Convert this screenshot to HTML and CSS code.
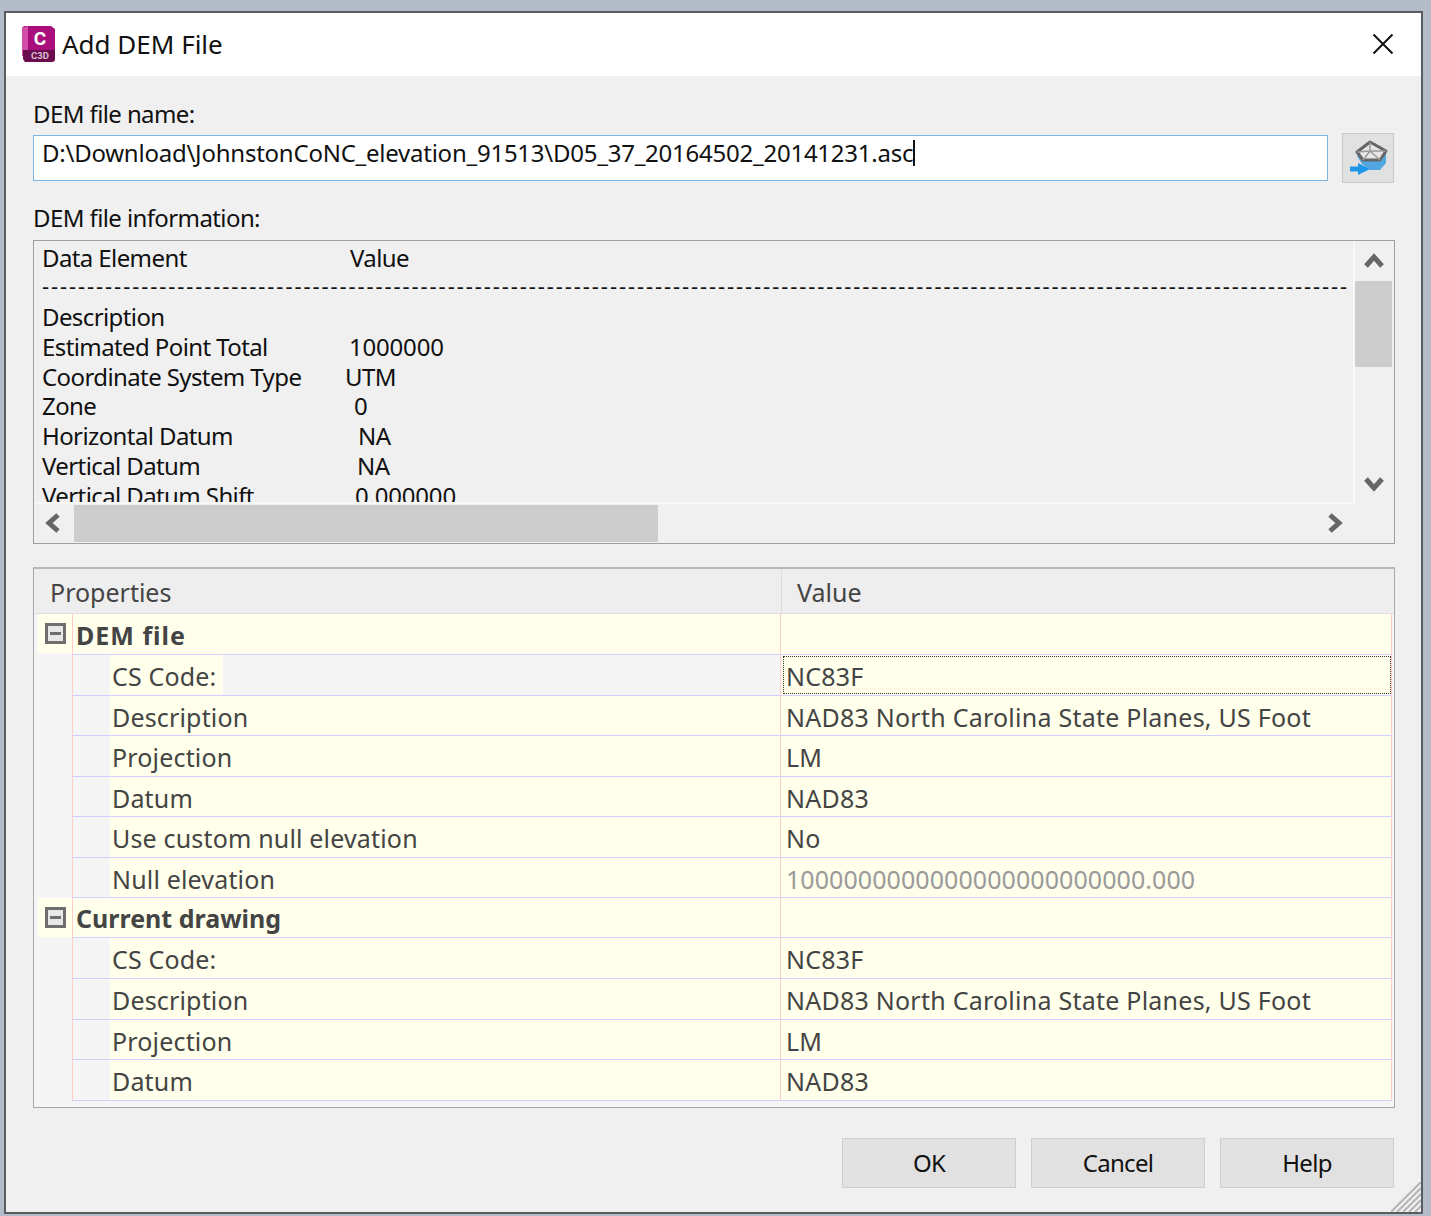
FILE: index.html
```html
<!DOCTYPE html>
<html lang="en">
<head>
<meta charset="utf-8">
<title>Add DEM File</title>
<link rel="stylesheet" href="styles.css">
</head>
<body>
<div class="window">
  <header class="titlebar">
    <svg class="app-icon" width="34" height="37" viewBox="0 0 34 37">
      <path d="M3 1H30L34 4V29H4L1 31V3Z" fill="#a80f7d"/>
      <path d="M1 3L7 1V27L1 30Z" fill="#d14fa6"/>
      <path d="M2 25H34V34Q34 37 31 37H4L2 34Z" fill="#6a0d4e"/>
      <text x="19" y="20" class="icon-c">C</text>
      <text x="19" y="34" class="icon-sub">C3D</text>
    </svg>
    <span class="title">Add DEM File</span>
    <svg class="close" width="22" height="22" viewBox="0 0 22 22"><path d="M1.500 1.500L20.500 20.500M20.500 1.500L1.500 20.500" stroke="#111" stroke-width="2" fill="none"/></svg>
  </header>
  <main class="content">
    <label class="label label-first">DEM file name:</label>
    <div class="file-row">
      <div class="file-input"><span class="file-text">D:\Download\JohnstonCoNC_elevation_91513\D05_37_20164502_20141231.asc</span><span class="caret"></span></div>
      <button class="browse" type="button">
        <svg width="50" height="48" viewBox="-5 -4 50 48">
          <path d="M38 13V25L32 32H22L14 26L9 18Z" fill="#52a7e0"/>
          <path d="M22 4L38 13L32 22H15L9 14Z" fill="#e6e6e6" stroke="#666" stroke-width="3" stroke-linejoin="round"/>
          <path d="M22 4V13M22 13L9 14M22 13L38 13M22 13L15 22M22 13L32 22" stroke="#9a9a9a" stroke-width="1.500" fill="none"/>
          <path d="M2 28.500H10V25L22 31L10 37V33.500H2Z" fill="#1e96ea"/>
        </svg>
      </button>
    </div>
    <label class="label label-second">DEM file information:</label>
    <section class="info">
      <div class="info-text">
        <div class="line"><span class="k">Data Element</span><span class="v off-2">Value</span></div>
        <div class="dashes">-------------------------------------------------------------------------------------------------------------------------------------------------</div>
        <div class="line"><span class="k">Description</span></div>
        <div class="line"><span class="k">Estimated Point Total</span><span class="v off-1 num">1000000</span></div>
        <div class="line"><span class="k">Coordinate System Type</span><span class="v off-0">UTM</span></div>
        <div class="line"><span class="k">Zone</span><span class="v off-3 num">0</span></div>
        <div class="line"><span class="k">Horizontal Datum</span><span class="v off-4">NA</span></div>
        <div class="line"><span class="k">Vertical Datum</span><span class="v off-5">NA</span></div>
        <div class="line"><span class="k">Vertical Datum Shift</span><span class="v off-6 num">0.000000</span></div>
      </div>
      <div class="vscroll">
        <svg class="arrow" width="20" height="16" viewBox="0 0 20 16"><path d="M2 14L10 5L18 14" stroke="#666" stroke-width="5" fill="none"/></svg>
        <div class="vthumb"></div>
        <svg class="arrow arrow-down" width="20" height="16" viewBox="0 0 20 16"><path d="M2 2L10 11L18 2" stroke="#666" stroke-width="5" fill="none"/></svg>
      </div>
      <div class="hscroll">
        <svg class="harrow" width="16" height="20" viewBox="0 0 16 20"><path d="M14 2L5 10L14 18" stroke="#666" stroke-width="5" fill="none"/></svg>
        <div class="hthumb"></div>
        <svg class="harrow harrow-right" width="16" height="20" viewBox="0 0 16 20"><path d="M2 2L11 10L2 18" stroke="#666" stroke-width="5" fill="none"/></svg>
      </div>
    </section>
    <section class="props">
      <div class="props-head"><div class="head-name">Properties</div><div class="head-val">Value</div></div>
      <div class="row group tall">
        <div class="gut"><span class="minus"></span></div>
        <div class="name"><span class="group-text wide">DEM file</span></div>
        <div class="val"></div>
      </div>
      <div class="row tall">
        <div class="gut"></div>
        <div class="name"><span class="name-text fit">CS Code:</span></div>
        <div class="val"><span class="focus">NC83F</span></div>
      </div>
      <div class="row"><div class="gut"></div><div class="name"><span class="name-text">Description</span></div><div class="val"><span class="val-text">NAD83 North Carolina State Planes, US Foot</span></div></div>
      <div class="row tall"><div class="gut"></div><div class="name"><span class="name-text">Projection</span></div><div class="val"><span class="val-text">LM</span></div></div>
      <div class="row"><div class="gut"></div><div class="name"><span class="name-text">Datum</span></div><div class="val"><span class="val-text">NAD83</span></div></div>
      <div class="row tall"><div class="gut"></div><div class="name"><span class="name-text">Use custom null elevation</span></div><div class="val"><span class="val-text">No</span></div></div>
      <div class="row"><div class="gut"></div><div class="name"><span class="name-text">Null elevation</span></div><div class="val"><span class="val-text disabled">1000000000000000000000000.000</span></div></div>
      <div class="row group">
        <div class="gut"><span class="minus"></span></div>
        <div class="name"><span class="group-text">Current drawing</span></div>
        <div class="val"></div>
      </div>
      <div class="row tall"><div class="gut"></div><div class="name"><span class="name-text">CS Code:</span></div><div class="val"><span class="val-text">NC83F</span></div></div>
      <div class="row tall"><div class="gut"></div><div class="name"><span class="name-text">Description</span></div><div class="val"><span class="val-text">NAD83 North Carolina State Planes, US Foot</span></div></div>
      <div class="row"><div class="gut"></div><div class="name"><span class="name-text">Projection</span></div><div class="val"><span class="val-text">LM</span></div></div>
      <div class="row tall"><div class="gut"></div><div class="name"><span class="name-text">Datum</span></div><div class="val"><span class="val-text">NAD83</span></div></div>
    </section>
    <footer class="buttons">
      <button class="btn" type="button">OK</button>
      <button class="btn" type="button">Cancel</button>
      <button class="btn" type="button">Help</button>
    </footer>
  </main>
  <svg class="grip" width="30" height="30" viewBox="0 0 30 30"><path d="M30 0L0 30M30 6L6 30M30 12L12 30M30 18L18 30M30 24L24 30" stroke="#b4b4b4" stroke-width="2" fill="none"/></svg>
</div>
</body>
</html>
```

FILE: styles.css
```css
* { box-sizing: border-box; }
html, body { margin: 0; height: 1216px; overflow: hidden; }
body {
  background: #b3bcc8;
  padding: 11px 8px 0 4px;
  font-family: "Noto Sans", sans-serif;
  color: #111;
}
.window {
  position: relative;
  width: 1419px;
  height: 1203px;
  border: 2px solid #5a5d60;
  background: #f0f0f0;
  overflow: hidden;
}
.titlebar {
  height: 63px;
  background: #fff;
  display: flex;
  align-items: center;
  padding: 0 27px 0 15px;
}
.app-icon { flex: none; margin-top: -2px; }
.icon-c { font: 700 19px Roboto, sans-serif; fill: #fff; text-anchor: middle; }
.icon-sub { font: 700 9.500px Roboto, sans-serif; fill: #dcc0d2; text-anchor: middle; }
.title { margin-left: 7px; margin-top: -2px; font-size: 26px; line-height: 36px; color: #111; }
.close { margin-left: auto; margin-top: -2px; }
.content { padding: 0 26px 0 27px; }
.label { display: block; font-size: 24px; line-height: 34px; letter-spacing: -0.6px; }
.label-first { padding-top: 21px; height: 57px; margin-bottom: 0; line-height: 33px; }
.label-second { margin-top: 18px; margin-bottom: 5px; }
.file-row { display: flex; align-items: center; height: 50px; }
.file-input {
  width: 1295px;
  height: 46px;
  background: #fff;
  border: 1px solid #7ab6e6;
  padding: 0 0 10px 8px;
  font-size: 24px;
  line-height: 34px;
  letter-spacing: -0.24px;
  white-space: nowrap;
  display: flex;
  align-items: center;
}
.caret { display: inline-block; width: 2px; height: 26px; background: #111; }
.browse {
  margin-left: 14px;
  width: 52px;
  height: 50px;
  padding: 0;
  background: #e1e1e1;
  border: 1px solid #c9c9c9;
  display: flex;
  align-items: center;
  justify-content: center;
}
.info {
  height: 304px;
  border: 1px solid #a0a0a0;
  display: grid;
  grid-template-columns: 1fr 39px;
  grid-template-rows: 1fr 39px;
}
.info-text {
  overflow: hidden;
  padding: 2px 0 0 8px;
  border-right: 2px solid #f8f8f8;
  border-bottom: 2px solid #f8f8f8;
  min-width: 0;
  min-height: 0;
  font-size: 24px;
  letter-spacing: -0.6px;
}
.line { display: flex; height: 29.700px; line-height: 29px; white-space: pre; }
.k { width: 308px; flex: none; }
.num { letter-spacing: -0.2px; }
.off-0 { margin-left: -5px; }
.off-1 { margin-left: -1px; }
.off-2 { margin-left: 0; }
.off-3 { margin-left: 4px; }
.off-4 { margin-left: 8px; }
.off-5 { margin-left: 7px; }
.off-6 { margin-left: 5px; }
.dashes { height: 29.700px; font-size: 22px; line-height: 24px; white-space: nowrap; width: 1306px; letter-spacing: 1.930px; }
.vscroll { grid-row: 1 / 3; grid-column: 2; display: flex; flex-direction: column; align-items: center; padding-right: 2px; }
.arrow { margin-top: 11px; flex: none; }
.vthumb { width: 37px; height: 86px; background: #cdcdcd; margin-top: 13px; flex: none; }
.arrow-down { margin-top: 110px; }
.hscroll { grid-row: 2; grid-column: 1; display: flex; align-items: center; padding-left: 10px; }
.harrow { flex: none; margin-top: -2px; }
.hthumb { width: 584px; height: 37px; margin-left: 14px; background: #cdcdcd; flex: none; }
.harrow-right { margin-left: auto; margin-right: 11px; }
.props {
  margin-top: 23px;
  height: 541px;
  border: 1px solid #a8a8ac;
  border-top: 2px solid #b8b8bc;
  background: #f5f5f5;
  padding-right: 2px;
  color: #444;
}
.props-head {
  height: 45px;
  background: #eeeeee;
  display: grid;
  grid-template-columns: 747px 1fr;
  font-size: 25px;
  line-height: 46px;
  margin-right: -2px;
  border-bottom: 1px solid #e0e0e0;
}
.head-name { padding-left: 16px; }
.head-val { padding-left: 15px; border-left: 1px solid #dcdcdc; }
.row {
  height: 40px;
  display: grid;
  grid-template-columns: 38px 708px 1fr;
  grid-template-rows: 100%;
  font-size: 25px;
  line-height: 36px;
  letter-spacing: 0.17px;
  white-space: nowrap;
}
.tall { height: 41px; }
.name, .val {
  border-left: 1px solid #ffcccc;
  border-bottom: 1px solid #d0d0ff;
  display: flex;
  min-width: 0;
  min-height: 0;
}
.name-text { flex: 1; margin-left: 37px; padding: 3px 0 0 2px; background: #ffffeb; }
.name-text.fit { flex: none; padding-right: 6px; }
.val { background: #ffffeb; border-right: 1px solid #ffcccc; letter-spacing: 0.24px; }
.val-text { padding: 3px 0 0 5px; }
.disabled { color: #9a9a9a; letter-spacing: 0.07px; }
.focus { flex: 1; margin: 1px 0 1px 2px; padding: 2px 0 0 2px; border: 1px dotted #333; line-height: 34px; }
.group .gut { margin-left: 4px; background: #ffffeb; height: 39px; display: flex; align-items: center; padding-left: 7px; }
.group .name { background: #ffffeb; }
.group-text { padding: 3px 0 0 3px; font-weight: 700; letter-spacing: 0; }
.group:not(.tall) .group-text { padding-top: 2px; }
.wide { letter-spacing: 1px; }
.minus {
  position: relative;
  width: 21px;
  height: 21px;
  border: 3px solid #6e6e6e;
  background: #e8e8e8;
}
.minus::after {
  content: "";
  position: absolute;
  left: 2px;
  right: 2px;
  top: 6px;
  height: 3px;
  background: #6e6e6e;
}
.buttons { margin-top: 30px; display: flex; justify-content: flex-end; gap: 15px; padding-right: 1px; }
.btn {
  width: 174px;
  height: 50px;
  background: #e1e1e1;
  border: 1px solid #cfcfcf;
  font: 24px "Noto Sans", sans-serif;
  letter-spacing: -0.7px;
  color: #111;
  padding: 0 0 2px;
}
.grip { position: absolute; right: 0; bottom: 0; }
```
